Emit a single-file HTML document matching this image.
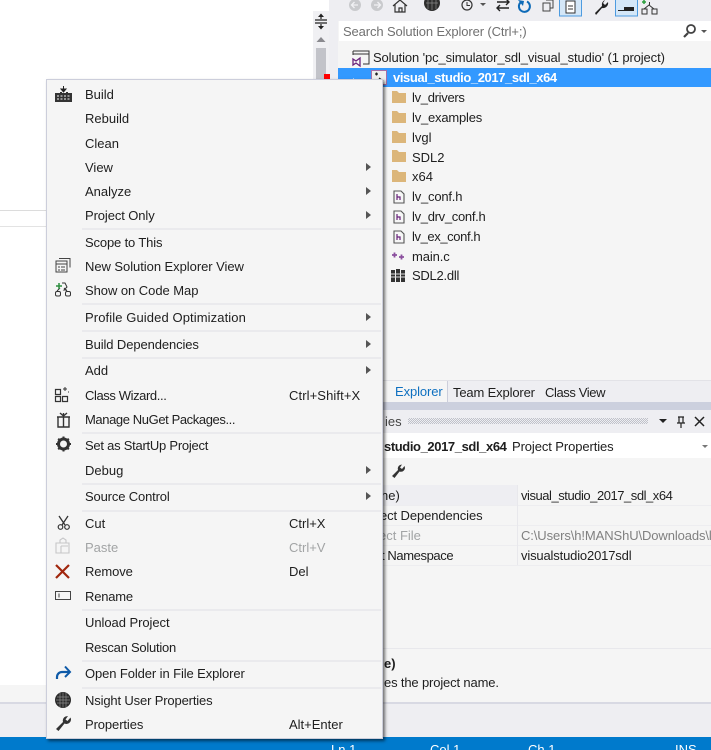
<!DOCTYPE html>
<html><head><meta charset="utf-8">
<style>
html,body{margin:0;padding:0;width:711px;height:750px;overflow:hidden;background:#fff}
body{position:relative;font-family:"Liberation Sans",sans-serif;font-size:13px;color:#1e1e1e}
.b{position:absolute}
.t{position:absolute;white-space:nowrap;line-height:16px;height:16px}
#menu{position:absolute;left:46px;top:79px;width:335px;height:658px;background:#f5f5f5;border:1px solid #cccedb;box-shadow:2px 2px 3px rgba(0,0,0,.55)}
#menu .t{margin-left:-47px;margin-top:-79px}
#menu .m{left:85px}
#menu .k{left:289px}
#menu .s{position:absolute;left:35px;width:299px;height:2px;background:#eaeaed}
#menu .a{position:absolute;left:319px;width:0;height:0;border-left:5px solid #555;border-top:4px solid transparent;border-bottom:4px solid transparent}
.d{color:#a2a4a5}
svg{position:absolute;overflow:visible}
</style></head><body>
<!-- left document area -->
<div class="b" style="left:0;top:0;width:329px;height:685px;background:#fff"></div>
<div class="b" style="left:0;top:210px;width:338px;height:1px;background:#dcdcdc"></div>
<div class="b" style="left:0;top:226px;width:338px;height:1px;background:#e3e3e3"></div>
<div class="b" style="left:0;top:685px;width:338px;height:18px;background:#f5f5f5"></div>
<div class="b" style="left:0;top:702px;width:711px;height:2px;background:#d8d9e3"></div>
<div class="b" style="left:0;top:704px;width:711px;height:33px;background:#eeeef2"></div>
<div class="b" style="left:0;top:737px;width:711px;height:13px;background:#007acc"></div>
<!-- scrollbar -->
<div class="b" style="left:329px;top:0;width:9px;height:702px;background:#eeeef2"></div>
<div class="b" style="left:313px;top:11px;width:16px;height:691px;background:#f0f0f3"></div>
<div class="b" style="left:316px;top:48px;width:10px;height:31px;background:#c2c3c9"></div>
<div class="b" style="left:324px;top:74px;width:6px;height:5px;background:#f00"></div>
<svg style="left:0;top:0" width="711" height="90">
<path d="M315 20h12M315 23h12" stroke="#222" stroke-width="1.200" fill="none"/>
<path d="M321 15v4M321 24v4" stroke="#222" stroke-width="1.200"/>
<path d="M318 17l3-3.500 3 3.500zM318 26l3 3.500 3-3.500z" fill="#222"/>
<path d="M316.500 42l4.500-5 4.500 5z" fill="#8a8a8f"/>
</svg>
<!-- solution explorer -->
<div class="b" style="left:338px;top:0;width:373px;height:702px;background:#f5f5f5"></div>
<div class="b" style="left:338px;top:0;width:373px;height:21px;background:#eeeef2"></div>
<div class="b" style="left:339px;top:21px;width:372px;height:20px;background:#fff"></div>
<div class="t" style="left:343px;top:24px;color:#717171;letter-spacing:-.12px">Search Solution Explorer (Ctrl+;)</div>
<svg style="left:0;top:0" width="711" height="60">
<circle cx="355" cy="5" r="6" fill="#c9cacd"/><path d="M358 5h-6M354.500 2l-3 3 3 3" stroke="#f1f1f4" stroke-width="1.300" fill="none"/>
<circle cx="377" cy="5" r="6" fill="#c9cacd"/><path d="M374 5h6M377.500 2l3 3-3 3" stroke="#f1f1f4" stroke-width="1.300" fill="none"/>
<path d="M393 6l7-6 7 6M395 4v8h10V4M399 12V8h3v4" stroke="#333" stroke-width="1.200" fill="none"/>
<circle cx="432" cy="3" r="8" fill="#2e2e2e"/><path d="M426 3h12M432-4v14M428-3v12M436-3v12" stroke="#888" stroke-width=".7"/>
<circle cx="467" cy="5" r="5" fill="none" stroke="#333" stroke-width="1.200"/><path d="M467 2v3.500h3" stroke="#333" fill="none"/>
<path d="M480 3l3 3 3-3z" fill="#555"/>
<path d="M497 2h12M506-1l3 3-3 3M509 8h-12M500 5l-3 3 3 3" stroke="#222" stroke-width="1.400" fill="none"/>
<path d="M527 1.500a5.500 5.500 0 1 1-6.500 1" stroke="#0e6bb8" stroke-width="2" fill="none"/><path d="M518 0l6 1-1 5z" fill="#0e6bb8"/>
<path d="M543 3h7v8h-7zM546 0h7v8h-3" stroke="#444" fill="none"/>
<rect x="559.500" y="-2" width="22" height="18" fill="#d4e7f8" stroke="#4d9be0"/>
<path d="M566 1h9v12h-9z" fill="#fff" stroke="#333"/><path d="M568 6h5M568 9h5" stroke="#333"/>
<path d="M595 13l7-7a5 5 0 0 1 3-6l-2 3 2 2 3-3a5 5 0 0 1-6 6l-6 7z" fill="#222"/>
<rect x="615.500" y="-2" width="22" height="18" fill="#d4e7f8" stroke="#4d9be0"/>
<path d="M624 7h10v3h-10z" fill="#222"/><path d="M618 10.500h16" stroke="#222"/>
<path d="M642 9h5v5h-5zM652 9h5v5h-5zM649.500 2v3M644 9l5-4 5 4" stroke="#333" fill="none"/>
<path d="M642 2h4M644 0v4" stroke="#2a9d3c" stroke-width="1.500"/>
<circle cx="691" cy="29" r="4" fill="none" stroke="#424242" stroke-width="1.800"/><path d="M688 33l-4 4" stroke="#424242" stroke-width="2.200"/>
<path d="M701 30l3 3 3-3z" fill="#555"/>
</svg>
<div class="b" style="left:338px;top:68px;width:373px;height:19px;background:#3399ff"></div>
<div class="t" style="left:373px;top:50px;letter-spacing:-.11px">Solution 'pc_simulator_sdl_visual_studio' (1 project)</div>
<div class="t" style="left:393px;top:70px;color:#fff;font-weight:bold;letter-spacing:-.4px">visual_studio_2017_sdl_x64</div>
<div class="t" style="left:412px;top:90px;letter-spacing:-.3px">lv_drivers</div>
<div class="t" style="left:412px;top:110px;letter-spacing:-.2px">lv_examples</div>
<div class="t" style="left:412px;top:130px">lvgl</div>
<div class="t" style="left:412px;top:150px">SDL2</div>
<div class="t" style="left:412px;top:169px">x64</div>
<div class="t" style="left:412px;top:189px;letter-spacing:-.2px">lv_conf.h</div>
<div class="t" style="left:412px;top:209px;letter-spacing:-.3px">lv_drv_conf.h</div>
<div class="t" style="left:412px;top:229px;letter-spacing:-.4px">lv_ex_conf.h</div>
<div class="t" style="left:412px;top:249px;letter-spacing:-.1px">main.c</div>
<div class="t" style="left:412px;top:268px;letter-spacing:-.25px">SDL2.dll</div>
<svg style="left:0;top:0" width="711" height="300">
<path d="M353 51h16v13h-6M353 51v4M353 54h16" stroke="#333" fill="none"/>
<path d="M353 59l3 2 4-3v8l-4-3-3 2z" fill="none" stroke="#68217a" stroke-width="1.300"/>
<path d="M354 78l-3 3h3z" fill="#fff"/>
<rect x="371.500" y="70.500" width="15" height="14" fill="#eee" stroke="#a56ea8"/>
<path d="M375 74h3M376.500 72.500v3M379 78l4 3" stroke="#222" stroke-width="1.300"/>
<g fill="#dcb67a"><path d="M392 91h5l2 2h7v10h-14z"/>
<path d="M392 111h5l2 2h7v10h-14zM392 131h5l2 2h7v10h-14zM392 150h5l2 2h7v10h-14zM392 170h5l2 2h7v10h-14z"/></g>
<g fill="#f6f6f6" stroke="#555" stroke-width="1.100">
<path d="M394 191h7l3 3v9h-10z"/><path d="M394 211h7l3 3v9h-10z"/><path d="M394 231h7l3 3v9h-10z"/></g>
<g stroke="#68217a" stroke-width="1.200" fill="none">
<path d="M397 194v6M397 197h3v3"/><path d="M397 214v6M397 217h3v3"/><path d="M397 234v6M397 237h3v3"/></g>
<path d="M392 255h5M394.500 252.500v5M399 257h5M401.500 254.500v5" stroke="#8b4f9e" stroke-width="1.800"/>
<g fill="#333"><rect x="391" y="270" width="4" height="12"/><rect x="396" y="269" width="4" height="13"/><rect x="401" y="270" width="4" height="12"/></g>
<path d="M391 274h14M391 277h14" stroke="#ddd"/>
</svg>
<!-- tabs -->
<div class="b" style="left:338px;top:380px;width:373px;height:1px;background:#e2e2e7"></div>
<div class="b" style="left:338px;top:381px;width:109px;height:21px;background:#f5f5f5;border-right:1px solid #cccedb"></div>
<div class="b" style="left:448px;top:381px;width:263px;height:21px;background:#eeeef2"></div>
<div class="t" style="left:395px;top:384px;color:#0e70c0;letter-spacing:-.1px">Explorer</div>
<div class="t" style="left:453px;top:385px;letter-spacing:-.15px">Team Explorer</div>
<div class="t" style="left:545px;top:385px;letter-spacing:-.4px">Class View</div>
<div class="b" style="left:338px;top:402px;width:373px;height:8px;background:#ccd0de"></div>
<!-- properties -->
<div class="b" style="left:338px;top:410px;width:373px;height:23px;background:#eeeef2"></div>
<div class="t" style="left:385px;top:414px;color:#444">ies</div>
<div class="b" style="left:408px;top:418px;width:240px;height:6px;background:repeating-conic-gradient(#bfc1c9 0 25%,#eeeef2 0 50%) 0 0/2px 2px"></div>
<div class="b" style="left:339px;top:433px;width:372px;height:25px;background:#fff"></div>
<svg style="left:0;top:0" width="711" height="490">
<path d="M659 419h8l-4 4z" fill="#222"/>
<path d="M678 417h6M679 417v6h4v-6M677 423h8M681 423v5" stroke="#222" stroke-width="1.200" fill="none"/>
<path d="M695 417l9 9M704 417l-9 9" stroke="#222" stroke-width="1.500"/>
<path d="M702 445h6l-3 3z" fill="#777"/>
<path d="M392 476l6-6a4 4 0 0 1 2-5l2-.5-2 3 2 1.500 2.500-3a4 4 0 0 1-5 5.500l-5 6.500z" fill="#333"/>
</svg>
<div class="t" style="left:384px;top:439px;font-weight:bold;letter-spacing:-.4px">studio_2017_sdl_x64</div>
<div class="t" style="left:512px;top:439px;letter-spacing:-.1px">Project Properties</div>
<div class="b" style="left:338px;top:485px;width:373px;height:20px;background:#eeeef2"></div>
<div class="b" style="left:518px;top:485px;width:193px;height:20px;background:#f5f5f5"></div>
<div class="b" style="left:338px;top:505px;width:373px;height:1px;background:#ededf0"></div>
<div class="b" style="left:338px;top:525px;width:373px;height:1px;background:#ededf0"></div>
<div class="b" style="left:338px;top:545px;width:373px;height:1px;background:#ededf0"></div>
<div class="b" style="left:338px;top:565px;width:373px;height:1px;background:#ededf0"></div>
<div class="b" style="left:517px;top:485px;width:1px;height:80px;background:#e8e8ec"></div>
<div class="t" style="left:381px;top:488px">ne)</div>
<div class="t" style="left:521px;top:488px;letter-spacing:-.46px">visual_studio_2017_sdl_x64</div>
<div class="t" style="left:380px;top:508px;letter-spacing:-.1px">ect Dependencies</div>
<div class="t d" style="left:379px;top:528px">ect File</div>
<div class="t" style="left:521px;top:528px;color:#808080;width:190px;overflow:hidden;letter-spacing:-.1px">C:\Users\h!MANShU\Downloads\lv</div>
<div class="t" style="left:381px;top:548px;letter-spacing:-.4px">t Namespace</div>
<div class="t" style="left:521px;top:548px;letter-spacing:-.16px">visualstudio2017sdl</div>
<div class="b" style="left:338px;top:648px;width:373px;height:1px;background:#e8e8ec"></div>
<div class="t" style="left:384px;top:656px;font-weight:bold">e)</div>
<div class="t" style="left:384px;top:675px;letter-spacing:-.15px">es the project name.</div>
<!-- status -->
<div class="t" style="left:331px;top:742px;color:#fff">Ln 1</div>
<div class="t" style="left:430px;top:742px;color:#fff">Col 1</div>
<div class="t" style="left:528px;top:742px;color:#fff">Ch 1</div>
<div class="t" style="left:675px;top:742px;color:#fff">INS</div>
<!-- context menu -->
<div id="menu">
<div class="t m" style="top:86px">Build</div>
<div class="t m" style="top:110px">Rebuild</div>
<div class="t m" style="top:135px">Clean</div>
<div class="t m" style="top:159px">View</div><div class="a" style="top:83px"></div>
<div class="t m" style="top:183px">Analyze</div><div class="a" style="top:107px"></div>
<div class="t m" style="top:207px;letter-spacing:-.1px">Project Only</div><div class="a" style="top:131px"></div>
<div class="s" style="top:148px"></div>
<div class="t m" style="top:234px;letter-spacing:-.15px">Scope to This</div>
<div class="t m" style="top:258px;letter-spacing:-.05px">New Solution Explorer View</div>
<div class="t m" style="top:282px;letter-spacing:-.05px">Show on Code Map</div>
<div class="s" style="top:223px"></div>
<div class="t m" style="top:309px;letter-spacing:.1px">Profile Guided Optimization</div><div class="a" style="top:233px"></div>
<div class="s" style="top:250px"></div>
<div class="t m" style="top:336px;letter-spacing:-.1px">Build Dependencies</div><div class="a" style="top:260px"></div>
<div class="s" style="top:277px"></div>
<div class="t m" style="top:362px">Add</div><div class="a" style="top:286px"></div>
<div class="t m" style="top:387px;letter-spacing:-.4px">Class Wizard...</div><div class="t k" style="top:387px;letter-spacing:.1px">Ctrl+Shift+X</div>
<div class="t m" style="top:411px;letter-spacing:-.4px">Manage NuGet Packages...</div>
<div class="s" style="top:352px"></div>
<div class="t m" style="top:437px;letter-spacing:-.25px">Set as StartUp Project</div>
<div class="t m" style="top:462px">Debug</div><div class="a" style="top:386px"></div>
<div class="s" style="top:403px"></div>
<div class="t m" style="top:488px;letter-spacing:-.15px">Source Control</div><div class="a" style="top:412px"></div>
<div class="s" style="top:430px"></div>
<div class="t m" style="top:515px">Cut</div><div class="t k" style="top:515px">Ctrl+X</div>
<div class="t m d" style="top:539px">Paste</div><div class="t k d" style="top:539px">Ctrl+V</div>
<div class="t m" style="top:563px;letter-spacing:-.1px">Remove</div><div class="t k" style="top:563px">Del</div>
<div class="t m" style="top:588px;letter-spacing:-.2px">Rename</div>
<div class="s" style="top:529px"></div>
<div class="t m" style="top:614px;letter-spacing:-.05px">Unload Project</div>
<div class="t m" style="top:639px;letter-spacing:-.25px">Rescan Solution</div>
<div class="s" style="top:580px"></div>
<div class="t m" style="top:665px;letter-spacing:-.1px">Open Folder in File Explorer</div>
<div class="s" style="top:607px"></div>
<div class="t m" style="top:692px;letter-spacing:-.15px">Nsight User Properties</div>
<div class="t m" style="top:716px;letter-spacing:-.1px">Properties</div><div class="t k" style="top:716px">Alt+Enter</div>
<svg style="left:-47px;top:-80px" width="400" height="750">
<!-- build -->
<path d="M55 93h5v-1h2v1h4v-1h2v1h4v9H55z" fill="#333"/>
<path d="M63.500 86v5M61 89l2.500 3 2.500-3z" stroke="#222" fill="#222"/>
<path d="M57 96h14M57 99h14" stroke="#f5f5f5" stroke-dasharray="2 1.500"/>
<!-- new se view -->
<path d="M56 261h11v11H56z" fill="#f5f5f5" stroke="#444"/>
<path d="M59 258.500h11v9" fill="none" stroke="#444"/>
<path d="M56 264h11M58 267h2M61 267h4M58 270h2M61 270h4" stroke="#444"/>
<!-- code map -->
<path d="M62 283h3l2 4-3 3 3 0M60 288l-3 3M64 288l3 3" stroke="#333" fill="none"/>
<rect x="55.500" y="291.500" width="5" height="4.500" rx="1.500" fill="none" stroke="#333"/>
<rect x="65.500" y="291.500" width="5" height="4.500" rx="1.500" fill="none" stroke="#333"/>
<path d="M56 286h6M59 283v6" stroke="#2c8f3e" stroke-width="1.500"/>
<!-- class wizard -->
<path d="M55.500 389.500h5v5h-5zM55.500 396.500h5v5h-5zM62.500 396.500h5v5h-5z" fill="none" stroke="#333" stroke-width="1.200"/>
<path d="M65 387v4M63 389h4M68 392h1" stroke="#333"/>
<!-- nuget -->
<path d="M58 417h11v10H58zM57 417h13M63.500 413v14" stroke="#333" stroke-width="1.400" fill="none"/>
<path d="M60 413l3.500 3 3.500-3" stroke="#333" stroke-width="1.400" fill="none"/>
<!-- gear -->
<circle cx="63.500" cy="444" r="5" fill="none" stroke="#333" stroke-width="3"/>
<path d="M63.500 436.500v3M63.500 448.500v3M56 444h3M68 444h3M58.200 438.700l2 2M66.800 447.300l2 2M58.200 449.300l2-2M66.800 440.700l2-2" stroke="#333" stroke-width="2"/>
<!-- scissors -->
<path d="M59 516l6 9M68 516l-6 9" stroke="#333" stroke-width="1.300"/>
<circle cx="60.500" cy="527" r="2.300" fill="none" stroke="#333" stroke-width="1.200"/>
<circle cx="67" cy="527" r="2.300" fill="none" stroke="#333" stroke-width="1.200"/>
<!-- paste -->
<path d="M56 543h13v10H56zM60 543v-3l3-2 3 2v3M61 546v7M61 546h7" fill="none" stroke="#c6c6c8" stroke-width="1.100"/>
<!-- remove -->
<path d="M56 565l13 13M69 565l-13 13" stroke="#a1260d" stroke-width="2.200"/>
<!-- rename -->
<rect x="55.500" y="591.500" width="15" height="8" fill="#f5f5f5" stroke="#444"/>
<path d="M59 593.500v4" stroke="#444"/>
<!-- open folder -->
<path d="M57 679v-2a5 5 0 0 1 5-5h7" fill="none" stroke="#0e5aa8" stroke-width="2.200"/>
<path d="M65 666.500l5 5.500-5 5" fill="none" stroke="#0e5aa8" stroke-width="2"/>
<!-- nsight -->
<circle cx="63" cy="700" r="8" fill="#2b2b2b"/>
<path d="M56 700h14M57 697h12M57 703h12M63 692.500v15M60 693v14M66 693v14" stroke="#8a8a8a" stroke-width=".7"/>
<!-- wrench -->
<path d="M56 729l7-7a4.500 4.500 0 0 1 2.500-5.500l2.500-.5-2.500 3.500 2 1.500 3-3.500a4.500 4.500 0 0 1-6 6l-6 7.500z" fill="#333"/>
</svg>
</div>
</body></html>
